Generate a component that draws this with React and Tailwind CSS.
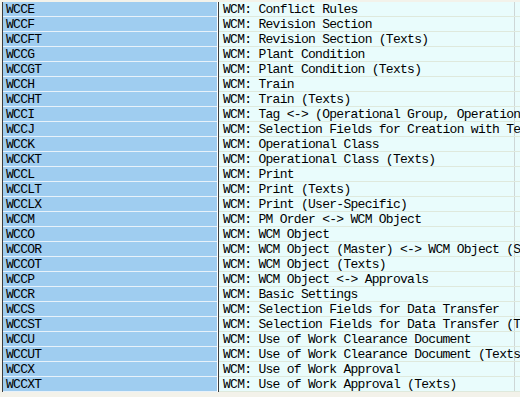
const rows = [
  ["WCCE", "WCM: Conflict Rules"],
  ["WCCF", "WCM: Revision Section"],
  ["WCCFT", "WCM: Revision Section (Texts)"],
  ["WCCG", "WCM: Plant Condition"],
  ["WCCGT", "WCM: Plant Condition (Texts)"],
  ["WCCH", "WCM: Train"],
  ["WCCHT", "WCM: Train (Texts)"],
  ["WCCI", "WCM: Tag <-> (Operational Group, Operational Class)"],
  ["WCCJ", "WCM: Selection Fields for Creation with Template"],
  ["WCCK", "WCM: Operational Class"],
  ["WCCKT", "WCM: Operational Class (Texts)"],
  ["WCCL", "WCM: Print"],
  ["WCCLT", "WCM: Print (Texts)"],
  ["WCCLX", "WCM: Print (User-Specific)"],
  ["WCCM", "WCM: PM Order <-> WCM Object"],
  ["WCCO", "WCM: WCM Object"],
  ["WCCOR", "WCM: WCM Object (Master) <-> WCM Object (Status)"],
  ["WCCOT", "WCM: WCM Object (Texts)"],
  ["WCCP", "WCM: WCM Object <-> Approvals"],
  ["WCCR", "WCM: Basic Settings"],
  ["WCCS", "WCM: Selection Fields for Data Transfer"],
  ["WCCST", "WCM: Selection Fields for Data Transfer (Texts)"],
  ["WCCU", "WCM: Use of Work Clearance Document"],
  ["WCCUT", "WCM: Use of Work Clearance Document (Texts)"],
  ["WCCX", "WCM: Use of Work Approval"],
  ["WCCXT", "WCM: Use of Work Approval (Texts)"],
];

export default function App() {
  return (
    <div
      className="w-[520px] h-[397px] overflow-hidden bg-[#f3f2ea] pt-[2px] text-black"
      style={{ fontFamily: '"Liberation Mono", "DejaVu Sans Mono", monospace' }}
    >
      {rows.map(([k, d]) => (
        <div key={k} className="flex h-[15px]">
          <div className="w-[2px] bg-[#f3f2ea]" />
          <div className="w-[1px] bg-[#3c3c3c]" />
          <div className="w-[214px] bg-[#9fcdf0] border-b border-[#e8f2fa] pl-[3px] pt-[1px] text-[13px] leading-[14px] tracking-[-0.72px] whitespace-nowrap">
            {k}
          </div>
          <div className="w-[1px] bg-white" />
          <div className="w-[1px] bg-[#3c3c3c]" />
          <div className="flex-1 bg-[linear-gradient(to_right,#e9fcfc_295px,#cdd6d6_295px,#cdd6d6_296px,#e9fcfc_296px)] border-b border-[#dfe9dc] pl-[4px] pt-[1px] text-[13px] leading-[14px] tracking-[-0.72px] whitespace-nowrap overflow-hidden">
            {d}
          </div>
        </div>
      ))}
    </div>
  );
}
